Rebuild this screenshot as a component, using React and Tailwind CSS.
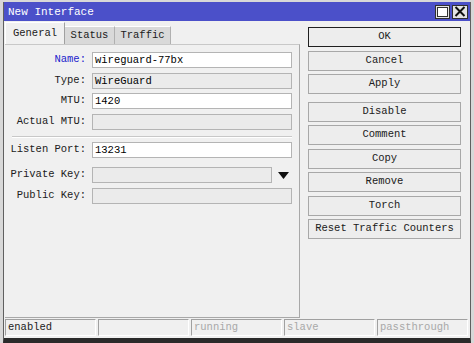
const mono = { fontFamily: '"Liberation Mono", "DejaVu Sans Mono", monospace' }

const Field = ({ label, value, disabled, blue, className = '' }) => (
  <div className={`flex items-center h-[16px] ${className}`}>
    <div className={`w-[82px] text-right pr-[1px] ${blue ? 'text-[#2222cc]' : 'text-[#202020]'}`}>{label}:</div>
    <div
      className={`ml-[5px] h-[16px] w-[200px] border border-[#b4b4b4] px-[2px] leading-[14px] ${disabled ? 'bg-[#ebebeb]' : 'bg-white'}`}
    >
      {value}
    </div>
  </div>
)

const Btn = ({ children, primary, className = '' }) => (
  <div
    className={`h-[20px] w-[153px] flex items-center justify-center bg-[#ededed] border ${primary ? 'border-[#202020]' : 'border-[#a8a8a8]'} text-[#202020] ${className}`}
  >
    {children}
  </div>
)

const Cell = ({ children, dim }) => (
  <div
    className={`h-[17px] border-t border-l border-[#a0a0a0] border-r-white border-b-white border-r border-b px-[2px] leading-[15px] ${dim ? 'text-[#a8a8a8]' : 'text-[#202020]'}`}
  >
    {children}
  </div>
)

export default function App() {
  return (
    <div className="w-[474px] h-[343px] bg-[#d8d8d8] overflow-hidden text-[10.5px]" style={mono}>
      <div className="ml-[3px] mt-[2px] w-[468px] h-[341px] flex flex-col bg-[#f0f0f0] border-l border-[#606060] border-r border-b-[5px] border-b-[#2a2a2a]">
        <div className="h-[19px] bg-[#4b50c9] flex items-center pl-[4px] text-white text-[11px]">
          <span className="flex-1 pt-[1px]">New Interface</span>
          <div className="w-[15px] h-[14px] bg-[#e4e4e4] border border-[#303030] flex items-center justify-center mr-[2px]">
            <div className="w-[11px] h-[10px] bg-white border border-[#303030]" />
          </div>
          <div className="w-[16px] h-[14px] bg-[#e4e4e4] border border-[#303030] flex items-center justify-center mr-[2px]">
            <svg width="12" height="11" viewBox="0 0 12 11">
              <path d="M1.5 1 L10.5 10 M10.5 1 L1.5 10" stroke="#101010" strokeWidth="2" />
            </svg>
          </div>
        </div>

        <div className="flex-1 flex">
          <div className="w-[296px] pl-[1px] pt-[2px] flex flex-col">
            <div className="flex items-end h-[21px]">
              <div className="h-[22px] w-[60px] bg-[#f0f0f0] border-t border-l border-white border-r border-r-[#a0a0a0] flex items-center justify-center text-[#202020] z-10">
                General
              </div>
              <div className="h-[18px] w-[50px] bg-[#d9d9d9] border-t border-white border-r border-r-[#b0b0b0] flex items-center justify-center text-[#202020]">
                Status
              </div>
              <div className="h-[18px] w-[56px] bg-[#d9d9d9] border-t border-white border-r border-r-[#b0b0b0] flex items-center justify-center text-[#202020]">
                Traffic
              </div>
            </div>
            <div className="flex-1 border-t border-[#c8c8c8] border-r border-r-[#a8a8a8] border-b border-b-[#a8a8a8] pt-[7px] flex flex-col">
              <Field label="Name" value="wireguard-77bx" blue />
              <Field label="Type" value="WireGuard" disabled className="mt-[5px]" />
              <Field label="MTU" value="1420" className="mt-[4px]" />
              <Field label="Actual MTU" value="" disabled className="mt-[5px]" />
              <div className="mt-[6px] ml-[7px] w-[280px] h-[2px] border-t border-[#c8c8c8] border-b border-b-white" />
              <Field label="Listen Port" value="13231" className="mt-[4px]" />
              <div className="flex items-center h-[16px] mt-[9px]">
                <div className="w-[82px] text-right pr-[1px] text-[#202020]">Private Key:</div>
                <div className="ml-[5px] h-[16px] w-[180px] border border-[#b4b4b4] bg-[#ebebeb]" />
                <svg width="11" height="7" viewBox="0 0 11 7" className="ml-[6px]">
                  <path d="M0 0 L11 0 L5.5 7 Z" fill="#101010" />
                </svg>
              </div>
              <Field label="Public Key" value="" disabled className="mt-[5px]" />
            </div>
          </div>

          <div className="ml-[8px] pt-[6px] flex flex-col gap-[3.5px]">
            <Btn primary>OK</Btn>
            <Btn>Cancel</Btn>
            <Btn>Apply</Btn>
            <Btn className="mt-[4px]">Disable</Btn>
            <Btn>Comment</Btn>
            <Btn>Copy</Btn>
            <Btn>Remove</Btn>
            <Btn>Torch</Btn>
            <Btn>Reset Traffic Counters</Btn>
          </div>
        </div>

        <div className="h-[20px] pl-[1px] pr-[2px] pt-[1px] grid grid-cols-5 gap-[2px]">
          <Cell>enabled</Cell>
          <Cell />
          <Cell dim>running</Cell>
          <Cell dim>slave</Cell>
          <Cell dim>passthrough</Cell>
        </div>
      </div>
    </div>
  )
}
